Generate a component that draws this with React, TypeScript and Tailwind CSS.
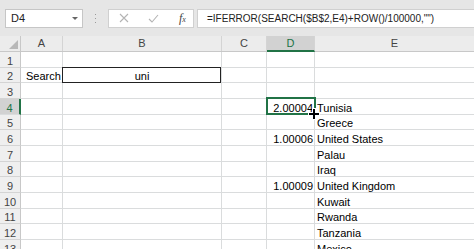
import React from "react";

type Row = { n: number; a?: string; b?: string; d?: string; e?: string };

const rows: Row[] = [
  { n: 1 },
  { n: 2, a: "Search", b: "uni" },
  { n: 3 },
  { n: 4, d: "2.00004", e: "Tunisia" },
  { n: 5, e: "Greece" },
  { n: 6, d: "1.00006", e: "United States" },
  { n: 7, e: "Palau" },
  { n: 8, e: "Iraq" },
  { n: 9, d: "1.00009", e: "United Kingdom" },
  { n: 10, e: "Kuwait" },
  { n: 11, e: "Rwanda" },
  { n: 12, e: "Tanzania" },
  { n: 13, e: "Mexico" },
];

const cell = "h-full shrink-0 border-r border-b border-[#dadcdd] flex items-end leading-[11px]";

export default function App() {
  return (
    <div
      className="w-[474px] h-[249px] overflow-hidden bg-white text-[#000] text-[11px]"
      style={{ fontFamily: '"Liberation Sans", Arial, sans-serif' }}
    >
      {/* formula bar */}
      <div className="h-[36px] bg-[#e6e6e6] flex items-center">
        <div className="ml-[5px] w-[78px] h-[19px] bg-white border border-[#c6c6c6] flex items-center pl-[5px] pr-[4px] text-[11px] text-[#222]">
          <span className="flex-1">D4</span>
          <span className="w-0 h-0 border-l-[3px] border-r-[3px] border-t-[3px] border-l-transparent border-r-transparent border-t-[#666]" />
        </div>
        <div className="w-[25px] flex flex-col items-center gap-[3px]">
          <span className="w-px h-px bg-[#9a9a9a]" />
          <span className="w-px h-px bg-[#9a9a9a]" />
          <span className="w-px h-px bg-[#9a9a9a]" />
        </div>
        <div className="w-[86px] h-[19px] bg-white border border-[#d0d0d0] flex items-center">
          <svg width="10" height="10" viewBox="0 0 10 10" className="ml-[10px]">
            <path d="M1 1 L9 9 M9 1 L1 9" stroke="#b4b4b4" strokeWidth="1.1" />
          </svg>
          <svg width="11" height="9" viewBox="0 0 11 9" className="ml-[19px]">
            <path d="M1 5 L4 8 L10 1" stroke="#b4b4b4" strokeWidth="1.1" fill="none" />
          </svg>
          <span
            className="ml-[20px] text-[#444] italic text-[12px] leading-none"
            style={{ fontFamily: '"Liberation Serif", serif' }}
          >
            f<span className="text-[8px]">x</span>
          </span>
        </div>
        <div className="ml-[3px] flex-1 h-[19px] bg-white border-y border-l border-[#d0d0d0] flex items-center pl-[9px] text-[10px] text-[#222] whitespace-nowrap">
          =IFERROR(SEARCH($B$2,E4)+ROW()/100000,"")
        </div>
      </div>

      {/* column headers */}
      <div className="h-[16px] flex bg-[#ececec] border-b border-[#c8c8c8] text-[#444]">
        <div className="w-[21px] shrink-0 border-r border-[#c8c8c8] flex items-end justify-end pr-[2px] pb-[2px]">
          <svg width="9" height="9" viewBox="0 0 9 9">
            <polygon points="9,0 9,9 0,9" fill="#b8b8b8" />
          </svg>
        </div>
        <div className="w-[42px] shrink-0 border-r border-[#d4d4d4] flex items-center justify-center">A</div>
        <div className="w-[159px] shrink-0 border-r border-[#d4d4d4] flex items-center justify-center">B</div>
        <div className="w-[45px] shrink-0 border-r border-[#d4d4d4] flex items-center justify-center">C</div>
        <div className="w-[48px] shrink-0 border-r border-[#d4d4d4] bg-[#d2d2d2] border-b-2 border-b-[#217346] -mb-px text-[#217346] flex items-center justify-center">D</div>
        <div className="flex-1 flex items-center justify-center">E</div>
      </div>

      {/* rows */}
      {rows.map((r) => {
        const active = r.n === 4;
        return (
          <div key={r.n} className="flex h-[15.67px]">
            <div
              className={`w-[21px] justify-center ${cell} ${
                active ? "bg-[#d2d2d2] text-[#217346] border-r-2 border-r-[#217346]" : "bg-[#efefef] text-[#444] border-r-[#c8c8c8] border-b-[#d4d4d4]"
              }`}
            >
              {r.n}
            </div>
            <div className={`w-[42px] pl-[5px] ${cell}`}>{r.a}</div>
            <div className={`w-[159px] justify-center relative ${cell}`}>
              {r.b}
              {r.b && <span className="absolute -left-px -top-px right-0 -bottom-px border border-[#222]" />}
            </div>
            <div className={`w-[45px] ${cell}`} />
            <div className={`w-[48px] justify-end pr-[1px] relative ${cell}`}>
              {r.d}
              {active && (
                <>
                  <span className="absolute -left-[1px] -top-[2px] w-[50px] h-[18px] border-2 border-[#217346]" />
                  <svg width="14" height="14" viewBox="0 0 14 14" className="absolute left-[40px] top-[8px] z-10">
                    <path d="M7 1 V13 M1 7 H13" stroke="#fff" strokeWidth="4" />
                    <path d="M7 2 V12 M2 7 H12" stroke="#000" strokeWidth="2" />
                  </svg>
                </>
              )}
            </div>
            <div className={`flex-1 pl-[2px] border-r-0 ${cell}`}>{r.e}</div>
          </div>
        );
      })}
    </div>
  );
}
